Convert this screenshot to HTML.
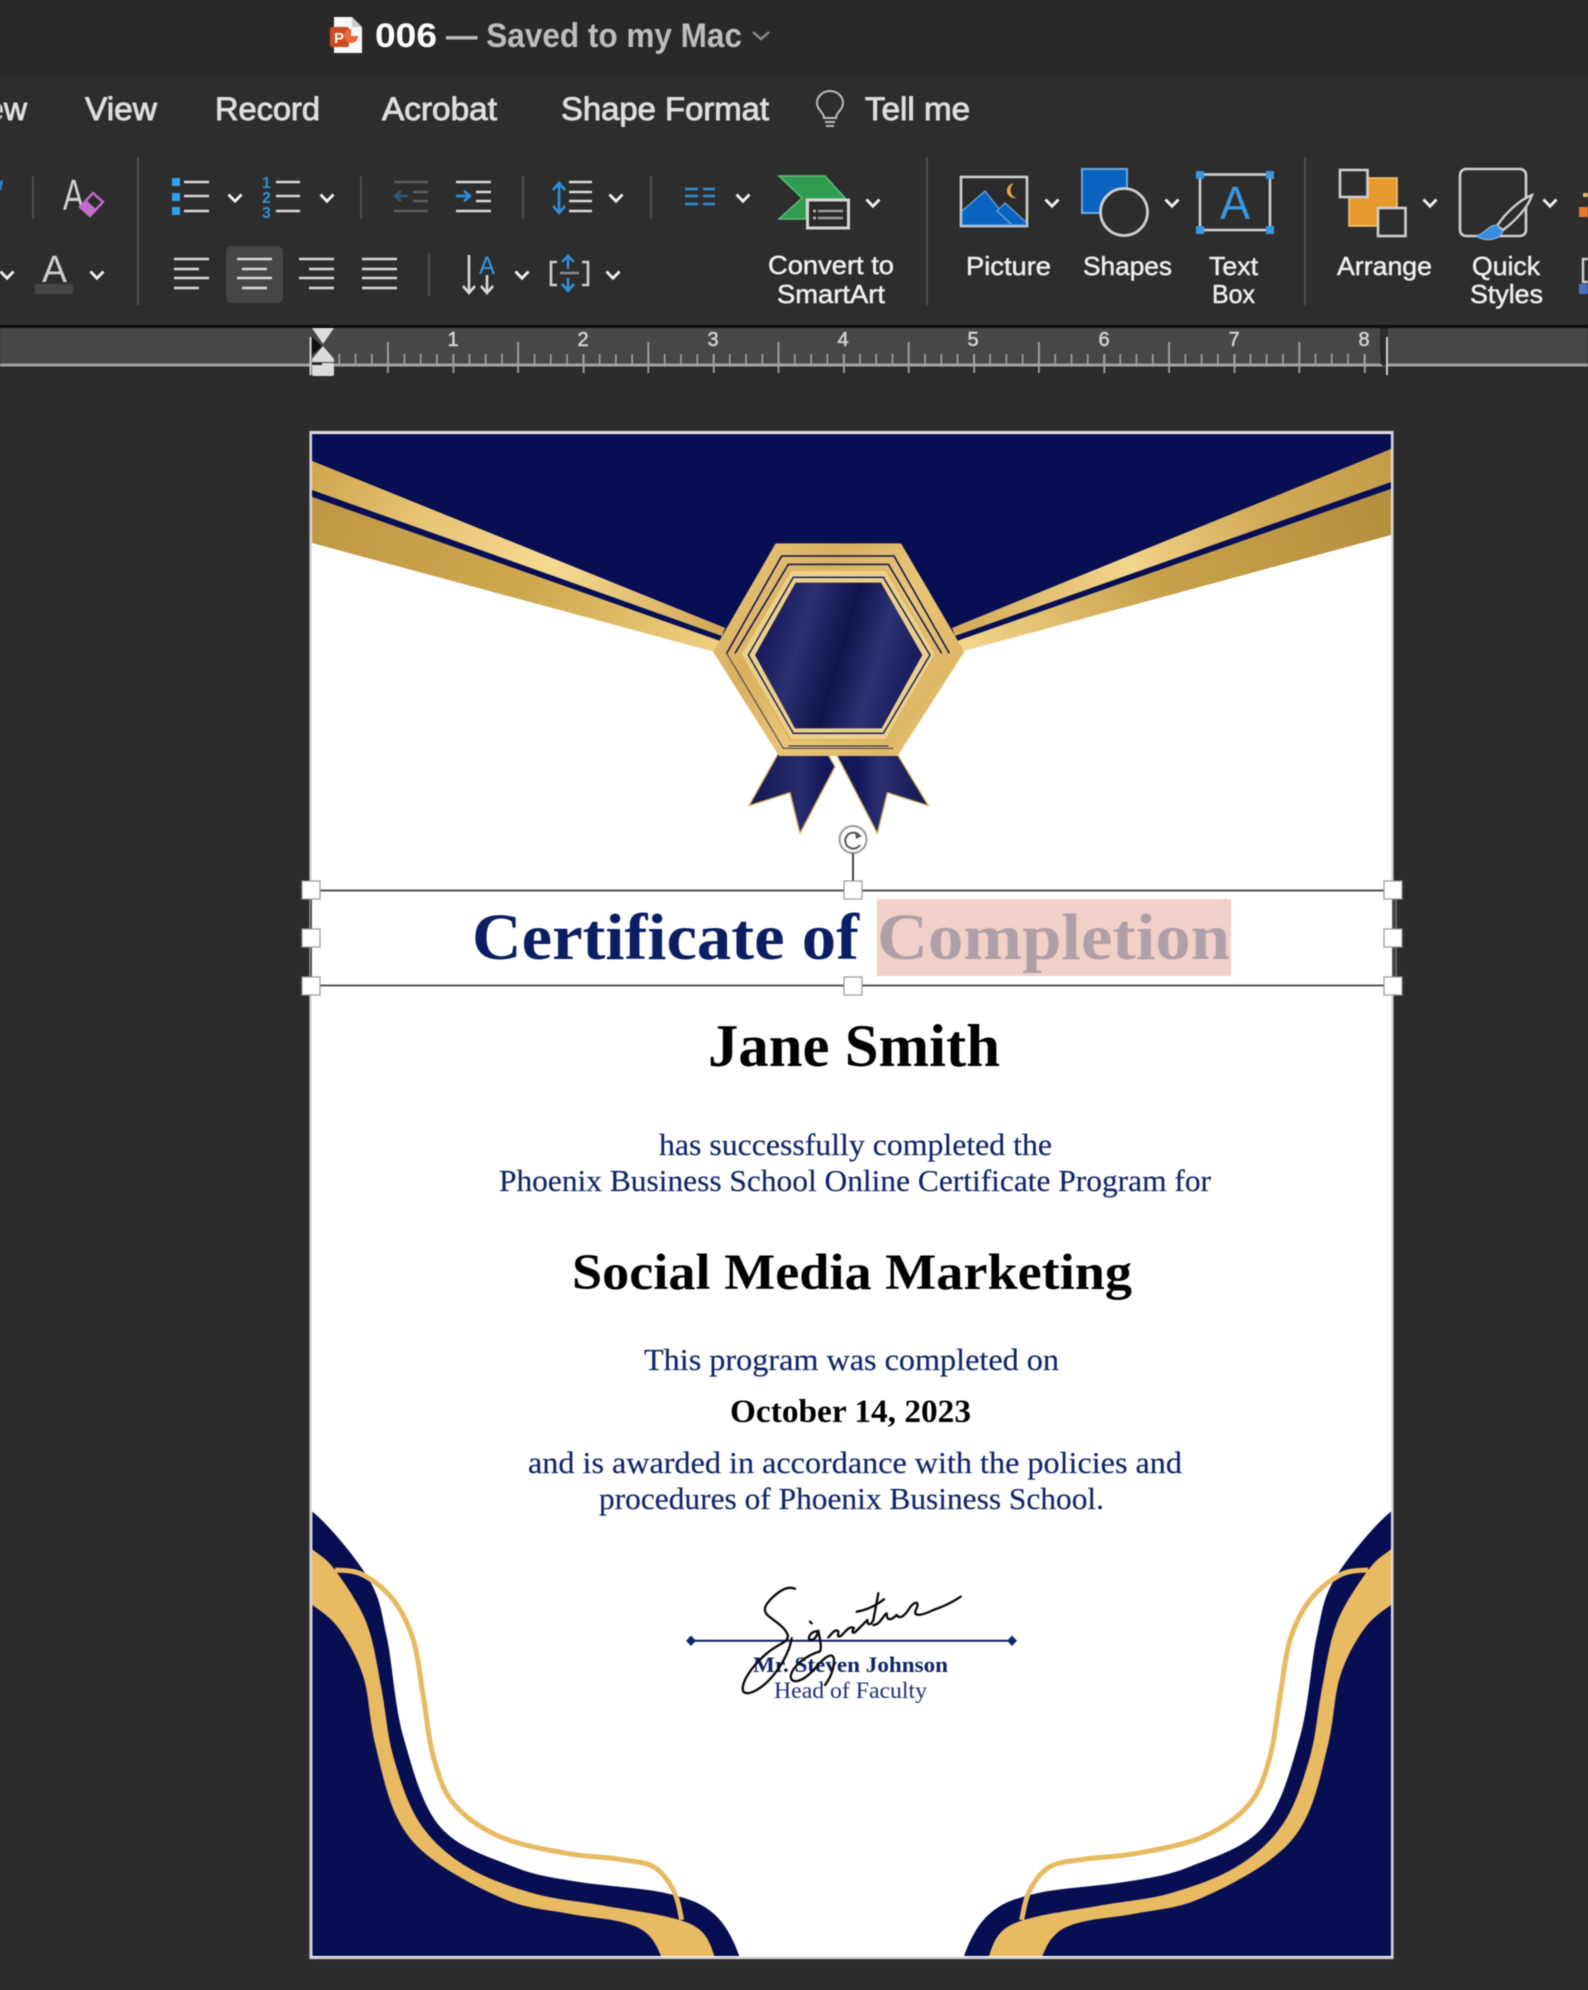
<!DOCTYPE html>
<html>
<head>
<meta charset="utf-8">
<title>006 — Saved to my Mac</title>
<style>
html,body{margin:0;padding:0;background:#2c2c2c;}
body{width:1588px;height:1990px;overflow:hidden;}
svg{display:block;filter:blur(.45px);}
text{font-family:"Liberation Sans",sans-serif;}
.m{font-size:32px;fill:#dedede;stroke:#dedede;stroke-width:.9px;}
.l{font-size:26px;fill:#eeeeee;stroke:#eeeeee;stroke-width:.5px;}
.r{font-size:20px;fill:#d4d4d4;stroke:#d4d4d4;stroke-width:.5px;text-anchor:middle;}
.s{font-family:"Liberation Serif",serif;}
.n{fill:#0f2466;stroke:#0f2466;stroke-width:.15px;font-size:31px;}
.b{font-weight:bold;fill:#000;}
.ln{stroke:#dadada;stroke-width:2.6;fill:none;}
.dim{stroke:#5b5b5b;stroke-width:2.6;fill:none;}
.blue{stroke:#2f8fd8;stroke-width:2.6;fill:none;}
.sep{stroke:#505050;stroke-width:2;}
.ic{fill:none;stroke:#cfcfcf;stroke-width:2.6;}
</style>
</head>
<body>
<svg xmlns="http://www.w3.org/2000/svg" width="1588" height="1990" viewBox="0 0 1588 1990">
<defs>
  <path id="ch" d="M-6.5 -3.5L0 3.2L6.5 -3.5" fill="none" stroke="#f2f2f2" stroke-width="2.8"/>
  <linearGradient id="gU" gradientUnits="userSpaceOnUse" x1="312" y1="470" x2="728" y2="632">
    <stop offset="0" stop-color="#d0a54d"/><stop offset=".25" stop-color="#e6c272"/><stop offset=".58" stop-color="#f6da92"/><stop offset="1" stop-color="#cfa552"/>
  </linearGradient>
  <linearGradient id="gL" gradientUnits="userSpaceOnUse" x1="312" y1="520" x2="718" y2="645">
    <stop offset="0" stop-color="#c09845"/><stop offset=".55" stop-color="#d0a94f"/><stop offset="1" stop-color="#f0d080"/>
  </linearGradient>
  <linearGradient id="gRU" gradientUnits="userSpaceOnUse" x1="1391" y1="465" x2="952" y2="632">
    <stop offset="0" stop-color="#c59c48"/><stop offset=".3" stop-color="#d3ab58"/><stop offset=".6" stop-color="#f3d58c"/><stop offset="1" stop-color="#d2a957"/>
  </linearGradient>
  <linearGradient id="gRL" gradientUnits="userSpaceOnUse" x1="1391" y1="510" x2="960" y2="645">
    <stop offset="0" stop-color="#b58f3d"/><stop offset=".55" stop-color="#c9a24a"/><stop offset="1" stop-color="#f4d78e"/>
  </linearGradient>
  <linearGradient id="mG" gradientUnits="userSpaceOnUse" x1="105" y1="100" x2="847" y2="700">
    <stop offset="0" stop-color="#ecca7c"/><stop offset=".3" stop-color="#d8b060"/><stop offset=".55" stop-color="#e8c576"/><stop offset=".8" stop-color="#dfb866"/><stop offset="1" stop-color="#f1d388"/>
  </linearGradient>
  <linearGradient id="mC" gradientUnits="userSpaceOnUse" x1="260" y1="340" x2="700" y2="470">
    <stop offset="0" stop-color="#181c5c"/><stop offset=".22" stop-color="#2b3070"/><stop offset=".5" stop-color="#11144c"/><stop offset=".74" stop-color="#2c3172"/><stop offset="1" stop-color="#181c5c"/>
  </linearGradient>
  <linearGradient id="rb" gradientUnits="userSpaceOnUse" x1="210" y1="800" x2="750" y2="800">
    <stop offset="0" stop-color="#12164f"/><stop offset=".28" stop-color="#272c6c"/><stop offset=".42" stop-color="#14185a"/><stop offset=".6" stop-color="#14185a"/><stop offset=".72" stop-color="#2a2f70"/><stop offset="1" stop-color="#12164f"/>
  </linearGradient>
  <g id="corner">
    <path fill="#080e52" d="M37 65C82 100 168 202.5 205 265C242 327.5 242.5 361 260 440C277.5 519 283 645 310 740C337 835 365 945 420 1010C475 1075 572 1102.5 640 1130C708 1157.5 753 1162 830 1175C907 1188 1032 1194 1100 1210C1168 1226 1204 1239 1240 1270C1276 1301 1300 1348 1318 1398L37 1398Z"/>
    <path fill="#e8ba62" d="M37 178C62 198 78 203 105 240C132 277 177 340 200 400C223 460 232 533 245 600C258 667 261 733 280 800C299 867 323 945 360 1000C397 1055 443 1095 500 1130C557 1165 633 1191 700 1210C767 1229 833 1233 900 1245C967 1257 1050 1267.5 1100 1280C1150 1292.5 1176 1300 1200 1320C1224 1340 1233 1368 1243 1398L1083 1398C1071 1368 1060 1347 1040 1330C1020 1313 1000 1305 960 1295C920 1285 857 1281 800 1270C743 1259 687 1257 620 1230C553 1203 455 1152 400 1110C345 1068 319 1038 290 980C261 922 242 830 225 760C208 690 207.5 617 190 560C172.5 503 145 456 120 420C95 384 62 363 37 345Z"/>
    <path fill="none" stroke="#e8ba62" stroke-width="15" d="M105 240C133 242 161 240 190 255C219 270 255 297.5 280 330C305 362.5 325 402 340 450C355 498 360 562 370 620C380 678 385 747 400 800C415 853 427 900 460 940C493 980 543 1015 600 1040C657 1065 740 1079 800 1090C860 1101 917 1101 960 1108C1003 1115 1033 1115 1060 1130C1087 1145 1106 1173 1120 1200C1134 1227 1139 1260 1145 1290"/>
  </g>
</defs>

<!-- backgrounds -->
<rect width="1588" height="1990" fill="#2c2c2c"/>
<rect width="1588" height="75" fill="#292929"/>
<rect y="75" width="1588" height="251" fill="#2d2d2d"/>
<rect y="325" width="1588" height="3" fill="#0c0c0c"/>

<!-- title bar -->
<path d="M334 17H352L362 27V53H334Z" fill="#f7f7f7"/>
<path d="M352 17V27H362Z" fill="#c9c9c9"/>
<rect x="330" y="27" width="19" height="20" rx="2" fill="#d04a20"/>
<text x="334" y="43" style="font-size:15px;font-weight:bold;fill:#fff">P</text>
<path d="M351 29A7 7 0 1 0 358 36H351Z" fill="#e8683a"/>
<text x="375" y="47" textLength="62" lengthAdjust="spacingAndGlyphs" style="font-size:34px;font-weight:bold;fill:#fff">006</text>
<text x="446" y="47" textLength="296" lengthAdjust="spacingAndGlyphs" style="font-size:34px;font-weight:bold;fill:#bdbdbd">— Saved to my Mac</text>
<path d="M753 32L761 39L769 32" fill="none" stroke="#8a8a8a" stroke-width="2.4"/>

<!-- menu -->
<text class="m" x="-14" y="120" textLength="41" lengthAdjust="spacingAndGlyphs">ew</text>
<text class="m" x="85" y="120" textLength="72" lengthAdjust="spacingAndGlyphs">View</text>
<text class="m" x="215" y="120" textLength="105" lengthAdjust="spacingAndGlyphs">Record</text>
<text class="m" x="382" y="120" textLength="115" lengthAdjust="spacingAndGlyphs">Acrobat</text>
<text class="m" x="561" y="120" textLength="208" lengthAdjust="spacingAndGlyphs">Shape Format</text>
<text class="m" x="865" y="120" textLength="105" lengthAdjust="spacingAndGlyphs">Tell me</text>
<path d="M824 118C824 112 817 110 817 103A13 12 0 0 1 843 103C843 110 836 112 836 118Z" fill="none" stroke="#bdbdbd" stroke-width="2"/>
<path d="M825 122H835M826 126H834" stroke="#bdbdbd" stroke-width="2"/>

<!-- separators -->
<path class="sep" d="M33 176V219M138 157V305M361 176V219M429 253V296M523 176V219M651 176V219M927 157V305M1305 157V305"/>

<!-- left bits -->
<path d="M0 181L3 180L1 191L0 190Z" fill="#2f8fd8"/>
<text x="63" y="210" textLength="21" lengthAdjust="spacingAndGlyphs" style="font-size:44px;fill:#cfcfcf">A</text>
<path d="M80 207L93 193L103 202L90 216Z" fill="#2d2d2d" stroke="#c46ccf" stroke-width="2.4"/>
<path d="M80 207L86 200L96 209L90 216Z" fill="#c46ccf"/>
<use href="#ch" x="7" y="275"/>
<text x="42" y="282" textLength="25" lengthAdjust="spacingAndGlyphs" style="font-size:38px;fill:#cfcfcf">A</text>
<rect x="35" y="284" width="38" height="10" fill="#464646"/>
<use href="#ch" x="97" y="275"/>

<!-- bullets -->
<path d="M172 178h8v8h-8zM172 193h8v8h-8zM172 207h8v8h-8z" fill="#34a0ea"/>
<path class="ln" d="M184 182H209M184 196H209M184 211H209"/>
<use href="#ch" x="235" y="198"/>
<g style="font-size:16px;font-weight:bold;fill:#2f8fd8">
<text x="262" y="188">1</text><text x="262" y="203">2</text><text x="262" y="218">3</text>
</g>
<path class="ln" d="M276 182H300M276 196H300M276 211H300"/>
<use href="#ch" x="327" y="198"/>
<!-- indents -->
<path class="dim" d="M394 182H428M413 192H428M413 201H428M394 211H428"/>
<path d="M408 196H396M401 191L395 196L401 201" fill="none" stroke="#2c5c82" stroke-width="2.6"/>
<path class="ln" d="M456 182H491M476 192H491M476 201H491M456 211H491"/>
<path class="blue" d="M456 196H469M464 191L470 196L464 201"/>
<!-- line spacing -->
<path class="blue" d="M559 184V212M553 190L559 183L565 190M553 206L559 213L565 206"/>
<path class="ln" d="M569 182H592M569 192H592M569 201H592M569 211H592"/>
<use href="#ch" x="616" y="198"/>
<!-- columns -->
<path class="blue" d="M685 189H698M703 189H715M685 196H698M703 196H715M685 204H698M703 204H715"/>
<use href="#ch" x="743" y="198"/>
<!-- alignment -->
<rect x="226" y="246" width="57" height="57" rx="6" fill="#464646"/>
<path class="ln" d="M174 259H209M174 269H199M174 278H209M174 288H199"/>
<path class="ln" d="M237 259H272M242 269H267M237 278H272M242 288H267"/>
<path class="ln" d="M299 259H334M309 269H334M299 278H334M309 288H334"/>
<path class="ln" d="M362 259H397M362 269H397M362 278H397M362 288H397"/>
<!-- text direction -->
<path class="ln" d="M469 255V292M463 286L469 293L475 286"/>
<text x="479" y="274" textLength="16" lengthAdjust="spacingAndGlyphs" style="font-size:25px;fill:#3a98e0">A</text>
<path class="ln" d="M487 275V292M481 286L487 293L493 286"/>
<use href="#ch" x="522" y="275"/>
<!-- align text -->
<path class="ic" d="M557 262H551V285H557M582 262H588V285H582"/>
<path d="M560 273H579" stroke="#8a8a8a" stroke-width="2.6"/>
<path class="blue" d="M568 256V269M562 262L568 256L574 262M568 278V290M562 284L568 291L574 284"/>
<use href="#ch" x="613" y="275"/>

<!-- smartart -->
<path d="M779 176H825L845 198V199H806V219H779L802 198Z" fill="#2f9c4f" stroke="#62bd7c" stroke-width="1.5"/>
<rect x="807.5" y="200" width="41" height="28" fill="#2a2a2a" stroke="#d5d5d5" stroke-width="3"/>
<path d="M818 211H843M818 218H843" stroke="#9a9a9a" stroke-width="2.4"/>
<path d="M813 211h3M813 218h3" stroke="#bbb" stroke-width="2.4"/>
<use href="#ch" x="873" y="203"/>
<text class="l" x="768" y="274" textLength="126" lengthAdjust="spacingAndGlyphs">Convert to</text>
<text class="l" x="777" y="303" textLength="108" lengthAdjust="spacingAndGlyphs">SmartArt</text>

<!-- picture -->
<rect x="961" y="177" width="66" height="49" fill="#2a2a2a" stroke="#d0d0d0" stroke-width="2.6"/>
<path d="M962 211L985 191L1012 225H962Z" fill="#0b63c1" stroke="#6aa8e0" stroke-width="1.2"/>
<path d="M997 211L1005 203L1026 222V225H1012Z" fill="#0b63c1" stroke="#6aa8e0" stroke-width="1.2"/>
<path d="M1014 183C1009 187 1009 196 1017 198C1011 199 1006 195 1007 189C1008 186 1010 184 1014 183Z" fill="#e8a33d"/>
<use href="#ch" x="1052" y="203"/>
<text class="l" x="966" y="275" textLength="85" lengthAdjust="spacingAndGlyphs">Picture</text>
<!-- shapes -->
<rect x="1082" y="169" width="45" height="44" fill="#0b63c1" stroke="#6aa8e0" stroke-width="2"/>
<circle cx="1124" cy="212" r="23.5" fill="#2d2d2d" stroke="#cfcfcf" stroke-width="2.8"/>
<use href="#ch" x="1172" y="203"/>
<text class="l" x="1083" y="275" textLength="89" lengthAdjust="spacingAndGlyphs">Shapes</text>
<!-- text box -->
<rect x="1200" y="174.5" width="70" height="55.5" fill="none" stroke="#cfcfcf" stroke-width="2.6"/>
<path d="M1196 171h8v8h-8zM1266 171h8v8h-8zM1196 226h8v8h-8zM1266 226h8v8h-8z" fill="#3a98e0"/>
<text x="1220" y="219" textLength="30" lengthAdjust="spacingAndGlyphs" style="font-size:46px;fill:#3a98e0">A</text>
<text class="l" x="1209" y="275" textLength="49" lengthAdjust="spacingAndGlyphs">Text</text>
<text class="l" x="1212" y="303" textLength="43" lengthAdjust="spacingAndGlyphs">Box</text>
<!-- arrange -->
<rect x="1349" y="178" width="48" height="48" fill="#e79a2c" stroke="#f3c878" stroke-width="1.5"/>
<rect x="1340" y="170" width="27.5" height="27" fill="#2d2d2d" stroke="#cfcfcf" stroke-width="2.6"/>
<rect x="1378" y="208" width="27.5" height="28" fill="#2d2d2d" stroke="#cfcfcf" stroke-width="2.6"/>
<use href="#ch" x="1430" y="203"/>
<text class="l" x="1337" y="275" textLength="95" lengthAdjust="spacingAndGlyphs">Arrange</text>
<!-- quick styles -->
<rect x="1460" y="169" width="66" height="67" rx="6" fill="none" stroke="#cfcfcf" stroke-width="2.6"/>
<path d="M1532 195C1520 200 1506 212 1497 226L1503 230C1514 222 1528 208 1532 195Z" fill="#2d2d2d" stroke="#cfcfcf" stroke-width="2.4"/>
<path d="M1497 225C1488 225 1486 233 1476 236C1484 242 1500 241 1503 231Z" fill="#3a8ddc" stroke="#8cc0ee" stroke-width="1"/>
<use href="#ch" x="1550" y="203"/>
<text class="l" x="1472" y="275" textLength="68" lengthAdjust="spacingAndGlyphs">Quick</text>
<text class="l" x="1470" y="303" textLength="73" lengthAdjust="spacingAndGlyphs">Styles</text>
<!-- right edge -->
<rect x="1579" y="207" width="9" height="10" fill="#e8762b"/>
<rect x="1583" y="193" width="5" height="4" fill="#e8b36b"/>
<rect x="1583" y="259" width="8" height="23" fill="none" stroke="#cfcfcf" stroke-width="2.4"/>
<rect x="1579" y="284" width="9" height="10" fill="#4472c4"/>

<!-- ruler -->
<rect y="328" width="1588" height="36" fill="#474747"/>
<rect y="363.5" width="1588" height="3" fill="#a2a2a2"/>
<rect x="1380" y="328" width="8" height="36" fill="#2a2a2a"/>
<path d="M1387 337V375" stroke="#cfcfcf" stroke-width="2"/>
<path d="M1382 364h4" stroke="#2c2c2c" stroke-width="4"/>
<line x1="338.5" y1="359.5" x2="1380" y2="359.5" stroke="#a2a2a2" stroke-width="11" stroke-dasharray="1.6 14.67"/>
<line x1="387" y1="357.5" x2="1380" y2="357.5" stroke="#a2a2a2" stroke-width="31" stroke-dasharray="1.8 128.4"/>
<line x1="452.5" y1="363.5" x2="1380" y2="363.5" stroke="#a2a2a2" stroke-width="19" stroke-dasharray="1.8 128.4"/>
<text class="r" x="453" y="346">1</text><text class="r" x="583" y="346">2</text><text class="r" x="713" y="346">3</text><text class="r" x="843" y="346">4</text><text class="r" x="973" y="346">5</text><text class="r" x="1104" y="346">6</text><text class="r" x="1234" y="346">7</text><text class="r" x="1364" y="346">8</text>
<path d="M312 328H334L323 344Z" fill="#dcdcdc"/>
<path d="M312 337L322 346L312 355Z" fill="#111"/>
<path d="M323 346L334 359V362H312V359Z" fill="#dcdcdc"/>
<rect x="312" y="363" width="22" height="13" rx="2" fill="#dcdcdc"/>
<path d="M310.5 337V375" stroke="#cfcfcf" stroke-width="2"/>
<path d="M312 364H322" stroke="#222" stroke-width="2"/>

<!-- page -->
<rect x="310.5" y="432" width="1082" height="1526" fill="#fff" stroke="#cfcfcf" stroke-width="2.2"/>
<path d="M312 434H1391V449L960 640L958 651H715L725 628L312 461Z" fill="#080e52"/>
<path d="M312 461L725 628L722 636L312 490Z" fill="url(#gU)"/>
<path d="M312 490L722 636L720 641L312 497Z" fill="#080e52"/>
<path d="M312 497L720 641L715 652L312 543Z" fill="url(#gL)"/>
<path d="M1391 449L952 628L955 636L1391 482Z" fill="url(#gRU)"/>
<path d="M1391 482L955 636L957 641L1391 489Z" fill="#080e52"/>
<path d="M1391 489L957 641L960 652L1391 535Z" fill="url(#gRL)"/>

<!-- medal -->
<g transform="translate(680 520) scale(.33333)">
  <path d="M295 700L445 705L465 740L360 940L330 818L207 857Z" fill="url(#rb)" stroke="#d6b060" stroke-width="4" stroke-linejoin="round"/>
  <path d="M470 705L650 700L745 857L622 818L592 940Z" fill="url(#rb)" stroke="#d6b060" stroke-width="4" stroke-linejoin="round"/>
  <path d="M290 75H660L847 395L650 703H300L105 395Z" fill="url(#mG)" stroke="url(#mG)" stroke-width="10" stroke-linejoin="round"/>
  <path d="M140 400L305 108H642L808 400" fill="none" stroke="#0b1152" stroke-width="4.5"/>
  <path d="M140 400L310 685H640" fill="none" stroke="#1d2050" stroke-width="2.5"/>
  <path d="M325 133H625L785 400L625 678H325L165 400Z" fill="url(#mG)"/>
  <path d="M165 400L325 133H625L785 400" fill="none" stroke="#0b1152" stroke-width="4.5"/>
  <path d="M325 678H625" fill="none" stroke="#1d2050" stroke-width="3"/>
  <path d="M332 150H618L768 402L618 660H332L182 402Z" fill="#ecd08a" stroke="#dcb564" stroke-width="6"/>
  <path d="M340 172H610L750 405L610 640H340L205 405Z" fill="#eccf8a" stroke="#0b1152" stroke-width="4"/>
  <path d="M347 188H603L727 405L605 625H345L225 405Z" fill="url(#mC)"/>
</g>

<!-- selection -->
<circle cx="853" cy="839.5" r="13.5" fill="#fff" stroke="#9a9a9a" stroke-width="2"/>
<path d="M859 835A8 8 0 1 0 860 845" fill="none" stroke="#555" stroke-width="2"/>
<path d="M855 832L862 836L856 839Z" fill="#555"/>
<path d="M853 853V888" stroke="#444" stroke-width="2"/>
<rect x="311" y="890.5" width="1082" height="95" fill="#fff" stroke="#555" stroke-width="2"/>
<path d="M1396 892V985" stroke="#777" stroke-width="1.5"/>
<rect x="877" y="899" width="354" height="77" fill="#f1d0c8"/>
<text class="s" x="472" y="959" textLength="387" lengthAdjust="spacingAndGlyphs" style="font-size:66px;font-weight:bold;fill:#0a1f63">Certificate of</text>
<text class="s" x="877" y="959" textLength="353" lengthAdjust="spacingAndGlyphs" style="font-size:66px;font-weight:bold;fill:#b09fa9">Completion</text>
<g fill="#fff" stroke="#999" stroke-width="1.2">
  <rect x="302" y="881" width="18" height="18"/><rect x="844" y="881" width="18" height="18"/><rect x="1384" y="881" width="18" height="18"/>
  <rect x="302" y="929" width="18" height="18"/><rect x="1384" y="929" width="18" height="18"/>
  <rect x="302" y="977" width="18" height="18"/><rect x="844" y="977" width="18" height="18"/><rect x="1384" y="977" width="18" height="18"/>
</g>

<!-- certificate text -->
<text class="s b" x="708" y="1066" textLength="292" lengthAdjust="spacingAndGlyphs" style="font-size:60px">Jane Smith</text>
<text class="s n" x="659" y="1155" textLength="393" lengthAdjust="spacingAndGlyphs">has successfully completed the</text>
<text class="s n" x="499" y="1191" textLength="712" lengthAdjust="spacingAndGlyphs">Phoenix Business School Online Certificate Program for</text>
<text class="s b" x="572" y="1289" textLength="560" lengthAdjust="spacingAndGlyphs" style="font-size:51px">Social Media Marketing</text>
<text class="s n" x="644" y="1370" textLength="415" lengthAdjust="spacingAndGlyphs">This program was completed on</text>
<text class="s b" x="730" y="1422" textLength="241" lengthAdjust="spacingAndGlyphs" style="font-size:33px">October 14, 2023</text>
<text class="s n" x="528" y="1473" textLength="654" lengthAdjust="spacingAndGlyphs">and is awarded in accordance with the policies and</text>
<text class="s n" x="599" y="1509" textLength="505" lengthAdjust="spacingAndGlyphs">procedures of Phoenix Business School.</text>

<!-- signature -->
<path d="M691 1640.7H1012" stroke="#0a1f63" stroke-width="2"/>
<path d="M691 1635.5L696 1640.7L691 1646L686 1640.7ZM1012 1635.5L1017 1640.7L1012 1646L1007 1640.7Z" fill="#0a2a6b"/>
<text class="s" x="753" y="1672" textLength="195" lengthAdjust="spacingAndGlyphs" style="font-size:22px;font-weight:bold;fill:#0f2466">Mr. Steven Johnson</text>
<text class="s" x="774" y="1698" textLength="153" lengthAdjust="spacingAndGlyphs" style="font-size:23px;fill:#1d3070">Head of Faculty</text>
<g transform="translate(660 1560) scale(.33333)" fill="none" stroke="#0a0a0a" stroke-width="7" stroke-linecap="round" stroke-linejoin="round">
  <path d="M405 86C385 78 360 90 335 115C315 135 308 150 322 165C345 185 375 200 383 225C388 250 350 250 315 285C275 320 240 370 250 395C265 410 310 385 345 340C375 300 390 265 395 235"/>
  <path d="M450 185L455 190M470 214C450 215 440 238 452 240C466 240 472 225 475 212C480 240 486 260 480 274C440 285 395 320 392 350C395 375 430 365 465 325C490 295 520 270 522 300C522 330 510 355 495 375"/>
  <path d="M505 232C515 222 525 205 535 214C535 226 530 232 542 228C556 218 565 196 582 204C574 216 578 226 592 210C606 196 612 190 622 180C622 196 632 198 640 180L655 100M590 155C620 150 650 135 672 118M640 195C660 195 670 165 680 160C680 185 695 180 710 165C720 180 735 165 745 150C760 125 780 120 770 145C755 170 780 170 820 150C850 140 880 125 902 110"/>
</g>

<!-- corners -->
<g transform="translate(300 1490) scale(.33333)"><use href="#corner"/></g>
<g transform="translate(1403.33 1490) scale(-.33333 .33333)"><use href="#corner"/></g>
</svg>
</body>
</html>
